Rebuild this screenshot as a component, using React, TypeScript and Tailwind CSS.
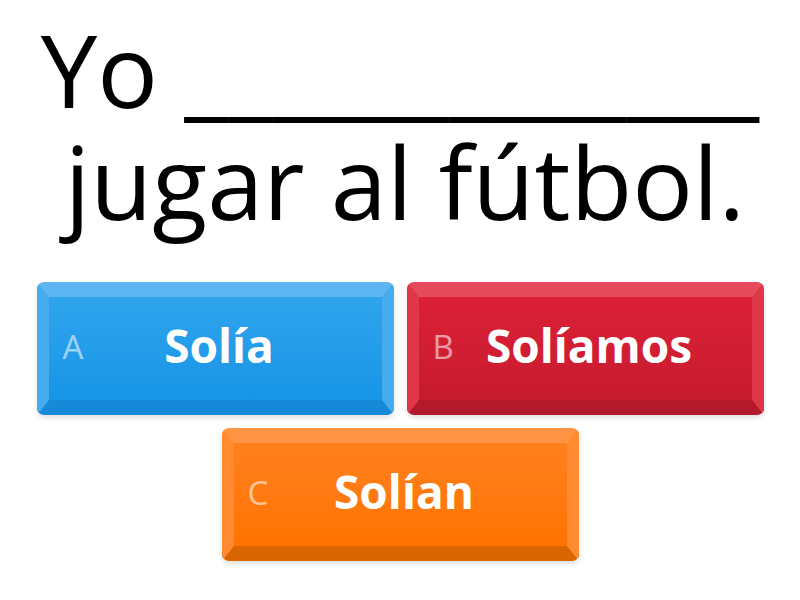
import React from "react";

type Opt = { letter: string; text: string; top: string; side: string; bottom: string; face: string };

const opts: Opt[] = [
  {
    letter: "A",
    text: "Solía",
    top: "border-t-[#5db6f1]",
    side: "border-x-[#46acef]",
    bottom: "border-b-[#168ad8]",
    face: "bg-gradient-to-b from-[#2fa4ed] to-[#1795e6]",
  },
  {
    letter: "B",
    text: "Solíamos",
    top: "border-t-[#e54b5d]",
    side: "border-x-[#e03649]",
    bottom: "border-b-[#b4192b]",
    face: "bg-gradient-to-b from-[#dc2036] to-[#c71b2f]",
  },
  {
    letter: "C",
    text: "Solían",
    top: "border-t-[#ff9444]",
    side: "border-x-[#ff8a30]",
    bottom: "border-b-[#d96600]",
    face: "bg-gradient-to-b from-[#ff801c] to-[#ff7300]",
  },
];

function Btn({ o }: { o: Opt }) {
  return (
    <div
      className={`w-[357px] h-[133px] rounded-[7px] border-t-[15px] border-b-[15px] border-x-[12px] ${o.top} ${o.side} ${o.bottom} shadow-[0_3px_5px_rgba(0,0,0,0.12)] overflow-hidden`}
    >
      <div className={`relative h-full w-full ${o.face} flex items-center justify-center`}>
        <span className="absolute left-[14px] top-[30px] text-[33px] leading-[40px] text-white/55 font-normal">
          {o.letter}
        </span>
        <span className="text-[46px] leading-none font-bold text-white pl-[8px] -mt-[8px]">{o.text}</span>
      </div>
    </div>
  );
}

export default function App() {
  return (
    <div
      className="w-[800px] h-[600px] bg-white overflow-hidden"
      style={{ fontFamily: '"Open Sans", "Noto Sans", sans-serif' }}
    >
      <div className="pt-[13px] text-center text-black text-[101px] leading-[112px] font-normal whitespace-nowrap">
        <div>Yo _____________</div>
        <div className="pl-[10px]">jugar al fútbol.</div>
      </div>
      <div className="mt-[45px] flex flex-col items-center gap-[13px]">
        <div className="flex gap-[13px]">
          <Btn o={opts[0]} />
          <Btn o={opts[1]} />
        </div>
        <Btn o={opts[2]} />
      </div>
    </div>
  );
}
